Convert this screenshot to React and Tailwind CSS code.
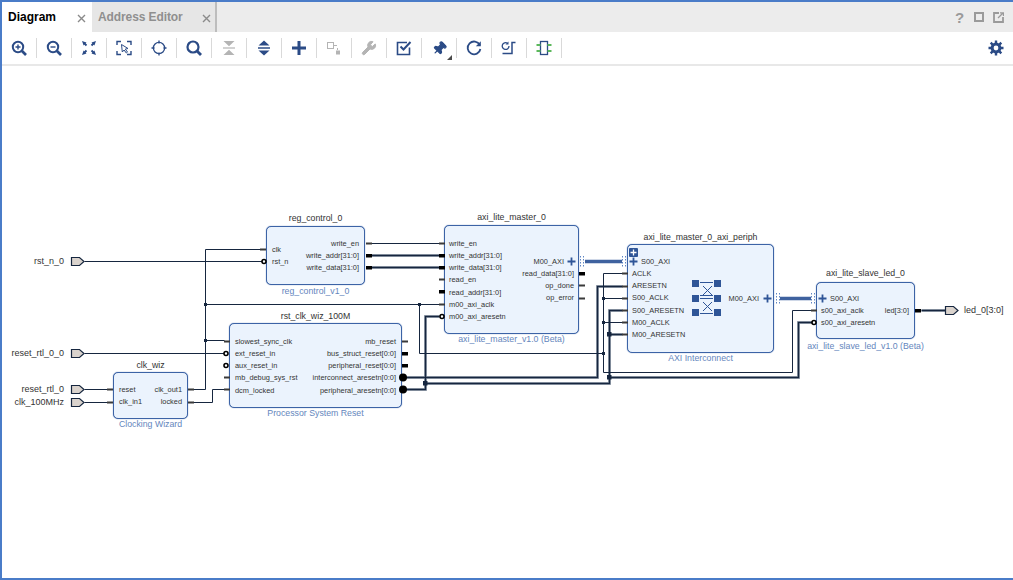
import { Pin, Wrench } from 'lucide-react';

const navy = '#2b4b86';
const gray = '#b4b4b4';

function ToolButton({ children, last }) {
  return (
    <div className={`flex h-5 w-[35px] items-center justify-center ${last ? '' : 'border-r border-[#d9d9d9]'}`}>
      {children}
    </div>
  );
}

function Glyph({ children }) {
  return (
    <svg width="18" height="18" viewBox="0 0 18 18" fill="none" strokeLinecap="butt">
      {children}
    </svg>
  );
}

function ToolIcons() {
  return (
    <>
      <ToolButton>
        <Glyph>
          <circle cx="8" cy="8" r="5.2" stroke={navy} strokeWidth="2" />
          <path d="M12 12l4 4" stroke={navy} strokeWidth="2.6" />
          <path d="M5.5 8h5M8 5.5v5" stroke={navy} strokeWidth="1.4" />
        </Glyph>
      </ToolButton>
      <ToolButton>
        <Glyph>
          <circle cx="8" cy="8" r="5.2" stroke={navy} strokeWidth="2" />
          <path d="M12 12l4 4" stroke={navy} strokeWidth="2.6" />
          <path d="M5.5 8h5" stroke={navy} strokeWidth="1.4" />
        </Glyph>
      </ToolButton>
      <ToolButton>
        <Glyph>
          <path d="M2 2l4.5 1.6L3.6 6.5zM16 2l-1.6 4.5-2.9-2.9zM2 16l1.6-4.5 2.9 2.9zM16 16l-4.5-1.6 2.9-2.9z" fill={navy} />
          <path d="M4 4l2.5 2.5M14 4l-2.5 2.5M4 14l2.5-2.5M14 14l-2.5-2.5" stroke={navy} strokeWidth="1.8" />
        </Glyph>
      </ToolButton>
      <ToolButton>
        <Glyph>
          <path d="M2 6V2.5h4M12 2.5h4V6M16 12v3.500h-4M6 15.500H2V12" stroke={navy} strokeWidth="1.4" />
          <path d="M6.500 5.500l6.500 4-2.700.6 2.200 3-1.200.9-2.200-3-1.800 2z" fill="#fff" stroke={navy} strokeWidth="1" />
        </Glyph>
      </ToolButton>
      <ToolButton>
        <Glyph>
          <circle cx="9" cy="9" r="5.600" stroke={navy} strokeWidth="1.300" />
          <path d="M9 1.500v3M9 13.500v3M1.500 9h3M13.500 9h3" stroke={navy} strokeWidth="1.300" />
        </Glyph>
      </ToolButton>
      <ToolButton>
        <Glyph>
          <circle cx="8" cy="8" r="5.500" stroke={navy} strokeWidth="2.200" />
          <path d="M12 12l4 4" stroke={navy} strokeWidth="2.800" />
        </Glyph>
      </ToolButton>
      <ToolButton>
        <Glyph>
          <path d="M3.500 2h11L9 7.200zM3.500 16h11L9 10.800z" fill={gray} />
          <path d="M3 9h12" stroke={gray} strokeWidth="1.200" />
        </Glyph>
      </ToolButton>
      <ToolButton>
        <Glyph>
          <path d="M9 1.500l5.500 5h-11zM9 16.500l-5.500-5h11z" fill={navy} />
          <path d="M3 9h12" stroke={navy} strokeWidth="1.500" />
        </Glyph>
      </ToolButton>
      <ToolButton>
        <Glyph>
          <path d="M9 2v14M2 9h14" stroke={navy} strokeWidth="3" />
        </Glyph>
      </ToolButton>
      <ToolButton>
        <Glyph>
          <rect x="2.500" y="3.500" width="6" height="6" stroke={gray} />
          <path d="M9 6.500h3M12.500 9v2" stroke={gray} />
          <rect x="11" y="11.500" width="4" height="4" fill={gray} />
        </Glyph>
      </ToolButton>
      <ToolButton>
        <Wrench size={16} color={gray} fill={gray} strokeWidth={1.500} />
      </ToolButton>
      <ToolButton>
        <Glyph>
          <path d="M14.500 8.500V15.500H2.500V3.500H12" stroke={navy} strokeWidth="1.600" />
          <path d="M5.500 7.500l3 3L15.500 3" stroke={navy} strokeWidth="2" />
        </Glyph>
      </ToolButton>
      <ToolButton>
        <div className="relative">
          <Pin size={15} color={navy} fill={navy} className="rotate-45" strokeWidth={2} />
          <span className="absolute right-[-5px] bottom-[-4px] h-0 w-0 border-b-[5px] border-l-[5px] border-b-[#4a4a4a] border-l-transparent" />
        </div>
      </ToolButton>
      <ToolButton>
        <Glyph>
          <path d="M14.800 6A6.400 6.400 0 1 0 15.400 10" stroke={navy} strokeWidth="1.800" />
          <path d="M15.800 2.200v5h-5z" fill={navy} />
        </Glyph>
      </ToolButton>
      <ToolButton>
        <Glyph>
          <path d="M7.500 4.200A3.400 3.400 0 1 0 9 7" stroke={navy} strokeWidth="1.300" />
          <path d="M8.500 2.500v3h-3z" fill={navy} />
          <path d="M2.500 14.500h9.500V3.500h3.500" stroke={navy} strokeWidth="1.500" />
        </Glyph>
      </ToolButton>
      <ToolButton>
        <Glyph>
          <rect x="5.500" y="2.500" width="7" height="13" fill="#fff" stroke={navy} strokeWidth="1.300" />
          <path d="M1.500 6h4M1.500 12h4M12.500 6h4M12.500 12h4" stroke="#5cb85c" strokeWidth="1.800" />
        </Glyph>
      </ToolButton>
    </>
  );
}

function Gear() {
  return (
    <svg width="16" height="16" viewBox="0 0 16 16" fill="none" stroke={navy}>
      <circle cx="8" cy="8" r="3.900" strokeWidth="3" />
      <path d="M8 .5v3M8 12.500v3M.5 8h3M12.500 8h3M2.700 2.700l2.100 2.100M11.200 11.200l2.100 2.100M13.300 2.700l-2.100 2.100M4.800 11.200l-2.100 2.100" strokeWidth="2.400" />
    </svg>
  );
}

function Port({ children, className = '' }) {
  return <div className={`h-[12.17px] leading-[12.17px] whitespace-nowrap ${className}`}>{children}</div>;
}

function Block({ box, name, nameClass, sub, subClass, children }) {
  return (
    <>
      <div className={`absolute text-center text-[8.75px] leading-[10px] whitespace-nowrap text-[#333] ${nameClass}`}>{name}</div>
      <div className={`absolute rounded-[5px] border border-[#3c63a6] bg-[#ebf3fd] text-[7.4px] text-[#333] shadow-[0_0_1px_#3c63a6] ${box}`}>
        {children}
      </div>
      <div className={`absolute text-center text-[8.75px] leading-[10px] whitespace-nowrap text-[#6486bd] ${subClass}`}>{sub}</div>
    </>
  );
}

function Plus({ className }) {
  return (
    <svg className={`absolute ${className}`} width="9" height="9" viewBox="0 0 9 9">
      <path d="M4.500 .5v8M.5 4.500h8" stroke="#2f5597" strokeWidth="1.800" />
    </svg>
  );
}

function ExternalLabel({ className, children }) {
  return (
    <div className={`absolute text-[9px] leading-[12px] whitespace-nowrap text-[#333] ${className}`}>{children}</div>
  );
}

// thin nets, pixel-centred
const thinNets = [
  'M84 261H264',
  'M84 353H226',
  'M84 389H107',
  'M84 402H107',
  'M188 389H205V249H260',
  'M205 304H439',
  'M205 340H224',
  'M193 402H212V389H224',
  'M366 243H439',
  'M419 304V353H603',
  'M603 273H622M603 273V372H792V310H811',
  'M603 298H622M603 322H622',
];

// bus nets drawn twice: grey halo, then dark core
const busNets = [
  'M371 255H439',
  'M371 267H439',
  'M403 377H597V286H622',
  'M403 389H425V316H439',
  'M425 383H609V310H622',
  'M609 334H622',
  'M609 377H798V322H812',
  'M921 310H945',
];

const stubs = [
  [260, 249], [107, 389], [107, 402], [224, 341], [224, 377], [224, 389],
  [439, 243], [439, 279], [439, 304],
  [366, 243], [188, 389], [188, 402],
  [579, 285], [579, 298], [402, 341],
  [622, 273], [622, 286], [622, 298], [622, 310], [622, 322], [622, 334],
  [811, 310],
];

const busStubs = [
  [366, 255], [366, 267], [439, 255], [439, 267], [439, 291],
  [579, 273], [402, 353], [402, 365], [915, 310],
];

const bubbles = [[264, 261], [226, 353], [226, 365], [442, 316], [814, 322]];
const dots = [[205, 304], [205, 340], [419, 304], [603, 298], [603, 322], [603, 353]];
const busDots = [[425, 383], [609, 377], [609, 334]];

function Wires() {
  return (
    <svg className="absolute top-0 left-0" width="1013" height="580" viewBox="0 0 1013 580" fill="none">
      <g stroke="#a3acb8" strokeWidth="3">
        {busNets.map((d) => <path key={d} d={d} transform="translate(.5 .5)" />)}
      </g>
      <g stroke="#16263f" strokeWidth="1.500">
        {busNets.map((d) => <path key={d} d={d} transform="translate(.5 .5)" />)}
      </g>
      <g stroke="#16263f" strokeWidth="1">
        {thinNets.map((d) => <path key={d} d={d} transform="translate(.5 .5)" />)}
      </g>

      {stubs.map(([x, y]) => <rect key={`${x}-${y}`} x={x} y={y - 0.5} width="6" height="2" fill="#3a3a3a" />)}
      {busStubs.map(([x, y]) => <rect key={`${x}-${y}`} x={x} y={y - 1} width="6" height="3.500" fill="#000" />)}
      {bubbles.map(([x, y]) => (
        <circle key={`${x}-${y}`} cx={x} cy={y + 0.5} r="2" fill="#fff" stroke="#000" strokeWidth="1.600" />
      ))}
      <circle cx="403" cy="377.500" r="4" fill="#000" />
      <circle cx="403" cy="389.500" r="4" fill="#000" />
      {dots.map(([x, y]) => <rect key={`${x}-${y}`} x={x - 1} y={y - 1} width="3" height="3" fill="#16263f" />)}
      {busDots.map(([x, y]) => <rect key={`${x}-${y}`} x={x - 2} y={y - 2} width="4.500" height="4.500" fill="#16263f" />)}

      {/* external ports */}
      {[261, 353, 389, 402].map((y) => (
        <path key={y} d={`M71.500 ${y - 3.500}H79.500L84 ${y + 0.500}L79.500 ${y + 4.500}H71.500Z`} fill="#dad3cd" stroke="#16263f" strokeWidth="1.200" />
      ))}
      <path d="M945.500 306.500H953.500L958 310.500L953.500 314.500H945.500Z" fill="#dad3cd" stroke="#16263f" strokeWidth="1.200" />

      {/* AXI interface links */}
      <path d="M585 261.500H622M780 298.500H811" stroke="#3f629f" strokeWidth="3.500" />
      <g stroke="#5f86c4" strokeWidth="1" strokeDasharray="1.500 1.500">
        <path d="M580.500 256V267M583.500 256V267M622.500 256V267M625.500 256V267" />
        <path d="M776.500 293V304M779.500 293V304M811.500 293V304M814.500 293V304" />
      </g>

      {/* interconnect crossbar */}
      <g fill="#2f5597">
        <rect x="692" y="280" width="7" height="7" /><rect x="714" y="280" width="7" height="7" />
        <rect x="692" y="295" width="7" height="7" /><rect x="714" y="295" width="7" height="7" />
        <rect x="692" y="309" width="7" height="7" /><rect x="714" y="309" width="7" height="7" />
      </g>
      <g stroke="#2f5597" strokeWidth="1">
        <path d="M700 282.500H713M700 295.500H713M700 298.500H713M700 313.500H713" />
        <path d="M703 286L712 295M712 286L703 295M703 302L712 311M712 302L703 311" />
      </g>
    </svg>
  );
}

export default function App() {
  return (
    <div className="flex h-[580px] w-[1013px] flex-col overflow-hidden border-t-2 border-b-2 border-l-2 border-t-[#4a7cc8] border-b-[#4a7cc8] border-l-[#4a7cc8] bg-white font-['Liberation_Sans',sans-serif]">
      {/* tabs */}
      <div className="flex h-[30px] shrink-0 items-stretch bg-[#ececec]">
        <div className="flex w-[90px] items-center bg-white pb-[1px] pl-[6px] text-[12px] font-bold text-black">
          <span>Diagram</span>
          <span className="mt-[3px] ml-auto mr-[6px] text-[#8a8a8a]"><CloseGlyph /></span>
        </div>
        <div className="flex w-[125px] items-center border-r-2 border-[#bdbdbd] bg-[#e6e6e6] pb-[1px] pl-[6px] text-[12px] font-bold tracking-[-0.1px] text-[#8f8f8f]">
          <span>Address Editor</span>
          <span className="mt-[3px] ml-auto mr-[4px] text-[#8a8a8a]"><CloseGlyph /></span>
        </div>
        <div className="ml-auto flex items-center gap-[9px] pr-[9px] text-[#9a9a9a]">
          <span className="w-[11px] text-center text-[15px] leading-none font-bold">?</span>
          <span className="h-[10px] w-[10px] border-2 border-[#9a9a9a]" />
          <svg width="11" height="11" viewBox="0 0 11 11" fill="none" stroke="#9a9a9a">
            <path d="M6 1H1V10H10V5" strokeWidth="1.800" />
            <path d="M5 6L10 1M7 .8h3.500V4" strokeWidth="1.300" />
          </svg>
        </div>
      </div>

      {/* toolbar */}
      <div className="flex h-[34px] shrink-0 items-center justify-between border-b-2 border-[#e8e8e8] pr-[9px]">
        <div className="flex items-center">
          <ToolIcons />
        </div>
        <Gear />
      </div>

      {/* canvas, children use page pixel coordinates */}
      <div className="relative flex-1 overflow-hidden">
        <div className="absolute top-[-66px] left-[-2px] h-[580px] w-[1013px]">
          <ExternalLabel className="right-[949px] top-[255px]">rst_n_0</ExternalLabel>
          <ExternalLabel className="right-[949px] top-[347px]">reset_rtl_0_0</ExternalLabel>
          <ExternalLabel className="right-[949px] top-[383px]">reset_rtl_0</ExternalLabel>
          <ExternalLabel className="right-[949px] top-[396px]">clk_100MHz</ExternalLabel>
          <ExternalLabel className="left-[964px] top-[304px]">led_0[3:0]</ExternalLabel>

          <Block
            box="left-[113px] top-[372px] h-[47px] w-[75px]"
            name="clk_wiz" nameClass="left-[113px] top-[360px] w-[75px]"
            sub="Clocking Wizard" subClass="left-[113px] top-[419px] w-[75px]"
          >
            <div className="flex justify-between px-[5px] pt-[11px]">
              <div><Port>reset</Port><Port>clk_in1</Port></div>
              <div className="text-right"><Port>clk_out1</Port><Port>locked</Port></div>
            </div>
          </Block>

          <Block
            box="left-[229px] top-[323px] h-[85px] w-[173px]"
            name="rst_clk_wiz_100M" nameClass="left-[229px] top-[311px] w-[173px]"
            sub="Processor System Reset" subClass="left-[229px] top-[408px] w-[173px]"
          >
            <div className="flex justify-between px-[5px] pt-[12px]">
              <div>
                <Port>slowest_sync_clk</Port>
                <Port>ext_reset_in</Port>
                <Port>aux_reset_in</Port>
                <Port>mb_debug_sys_rst</Port>
                <Port>dcm_locked</Port>
              </div>
              <div className="text-right">
                <Port>mb_reset</Port>
                <Port>bus_struct_reset[0:0]</Port>
                <Port>peripheral_reset[0:0]</Port>
                <Port>interconnect_aresetn[0:0]</Port>
                <Port>peripheral_aresetn[0:0]</Port>
              </div>
            </div>
          </Block>

          <Block
            box="left-[266px] top-[226px] h-[59px] w-[99px]"
            name="reg_control_0" nameClass="left-[266px] top-[213px] w-[99px]"
            sub="reg_control_v1_0" subClass="left-[266px] top-[286px] w-[99px]"
          >
            <div className="flex justify-between px-[5px] pt-[11px]">
              <div className="pt-[6px]"><Port>clk</Port><Port>rst_n</Port></div>
              <div className="text-right">
                <Port>write_en</Port>
                <Port>write_addr[31:0]</Port>
                <Port>write_data[31:0]</Port>
              </div>
            </div>
          </Block>

          <Block
            box="left-[444px] top-[225px] h-[109px] w-[135px]"
            name="axi_lite_master_0" nameClass="left-[444px] top-[212px] w-[135px]"
            sub="axi_lite_master_v1.0 (Beta)" subClass="left-[444px] top-[334px] w-[135px]"
          >
            <Plus className="left-[122px] top-[31px]" />
            <div className="flex justify-between pt-[12px] pr-[4px] pl-[4px]">
              <div>
                <Port>write_en</Port>
                <Port>write_addr[31:0]</Port>
                <Port>write_data[31:0]</Port>
                <Port>read_en</Port>
                <Port>read_addr[31:0]</Port>
                <Port>m00_axi_aclk</Port>
                <Port>m00_axi_aresetn</Port>
              </div>
              <div className="pt-[18px] text-right">
                <Port className="pr-[10px]">M00_AXI</Port>
                <Port>read_data[31:0]</Port>
                <Port>op_done</Port>
                <Port>op_error</Port>
              </div>
            </div>
          </Block>

          <Block
            box="left-[627px] top-[244px] h-[109px] w-[147px]"
            name="axi_lite_master_0_axi_periph" nameClass="left-[627px] top-[232px] w-[147px]"
            sub="AXI Interconnect" subClass="left-[627px] top-[353px] w-[147px]"
          >
            <div className="absolute top-[3px] left-[1px] flex h-[9px] w-[9px] items-center justify-center rounded-[1px] bg-[#2f5597]">
              <svg width="7" height="7" viewBox="0 0 7 7"><path d="M3.500 .5v6M.5 3.500h6" stroke="#fff" strokeWidth="1.300" /></svg>
            </div>
            <Plus className="left-[1px] top-[12px]" />
            <Plus className="left-[135px] top-[49px]" />
            <div className="flex justify-between pt-[11px] pl-[4px] pr-[14px]">
              <div>
                <Port className="pl-[9px]">S00_AXI</Port>
                <Port>ACLK</Port>
                <Port>ARESETN</Port>
                <Port>S00_ACLK</Port>
                <Port>S00_ARESETN</Port>
                <Port>M00_ACLK</Port>
                <Port>M00_ARESETN</Port>
              </div>
              <div className="pt-[37px] text-right"><Port>M00_AXI</Port></div>
            </div>
          </Block>

          <Block
            box="left-[816px] top-[282px] h-[57px] w-[99px]"
            name="axi_lite_slave_led_0" nameClass="left-[816px] top-[268px] w-[99px]"
            sub="axi_lite_slave_led_v1.0 (Beta)" subClass="left-[796px] top-[341px] w-[139px]"
          >
            <Plus className="left-[1px] top-[11px]" />
            <div className="flex justify-between pt-[10px] pr-[5px] pl-[4px]">
              <div>
                <Port className="pl-[9px]">S00_AXI</Port>
                <Port>s00_axi_aclk</Port>
                <Port>s00_axi_aresetn</Port>
              </div>
              <div className="pt-[12px] text-right"><Port>led[3:0]</Port></div>
            </div>
          </Block>

          <Wires />
        </div>
      </div>
    </div>
  );
}

function CloseGlyph() {
  return (
    <svg width="9" height="9" viewBox="0 0 9 9" stroke="currentColor" strokeWidth="1.400">
      <path d="M1 1l7 7M8 1l-7 7" />
    </svg>
  );
}
